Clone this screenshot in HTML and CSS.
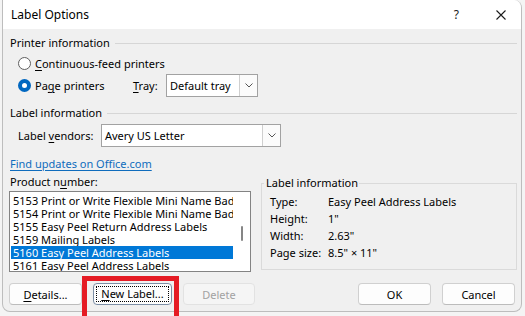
FILE: index.html
```html
<!DOCTYPE html>
<html lang="en">
<head>
    <meta charset="UTF-8">
    <title>Label Options</title>
    <link rel="stylesheet" href="styles.css">
</head>
<body>
    <div class="dialog">
        <div class="titlebar">
            <span class="title">Label Options</span>
            <div class="title-actions">
                <span class="help">?</span>
                <svg class="close" viewBox="0 0 10 10" width="10" height="10">
                    <path d="M0.5,0.5 L9.5,9.5 M9.5,0.5 L0.5,9.5" stroke="#1a1a1a" stroke-width="1.1" fill="none"/>
                </svg>
            </div>
        </div>

        <div class="content">
            <div class="group-head">Printer information</div>
            <div class="radio-row">
                <span class="radio"></span>
                <span><u>C</u>ontinuous-feed printers</span>
            </div>
            <div class="radio-row second">
                <span class="radio checked"></span>
                <span class="radio-text">Pa<u>g</u>e printers</span>
                <span class="tray-label"><u>T</u>ray:</span>
                <div class="combo tray">
                    <span class="combo-value">Default tray</span>
                    <span class="combo-arrow">
                        <svg viewBox="0 0 8 5" width="8" height="5"><polyline points="0.5,0.5 4,4 7.5,0.5" fill="none" stroke="#555" stroke-width="1"/></svg>
                    </span>
                </div>
            </div>

            <div class="group-head second-head">Label information</div>
            <div class="vendor-row">
                <span class="vendor-label">Label <u>v</u>endors:</span>
                <div class="combo vendor">
                    <span class="combo-value">Avery US Letter</span>
                    <span class="combo-arrow">
                        <svg viewBox="0 0 8 5" width="8" height="5"><polyline points="0.5,0.5 4,4 7.5,0.5" fill="none" stroke="#555" stroke-width="1"/></svg>
                    </span>
                </div>
            </div>

            <a class="link" href="#">Find updates on Office.com</a>

            <div class="columns">
                <div class="product">
                    <div class="product-label">Product n<u>u</u>mber:</div>
                    <div class="listbox">
                        <div class="list-items">
                            <div class="item">5153 Print or Write Flexible Mini Name Badges</div>
                            <div class="item">5154 Print or Write Flexible Mini Name Badges</div>
                            <div class="item">5155 Easy Peel Return Address Labels</div>
                            <div class="item">5159 Mailing Labels</div>
                            <div class="item selected">5160 Easy Peel Address Labels</div>
                            <div class="item">5161 Easy Peel Address Labels</div>
                        </div>
                        <div class="scrollbar"><span class="thumb"></span></div>
                    </div>
                </div>

                <fieldset class="info">
                    <legend>Label information</legend>
                    <div class="info-grid">
                        <span>Type:</span><span>Easy Peel Address Labels</span>
                        <span>Height:</span><span>1"</span>
                        <span>Width:</span><span>2.63"</span>
                        <span>Page size:</span><span>8.5" × 11"</span>
                    </div>
                </fieldset>
            </div>

            <div class="buttons">
                <button class="btn"><u>D</u>etails...</button>
                <button class="btn focused"><span class="focus-ring"><u>N</u>ew Label...</span></button>
                <button class="btn disabled">Delete</button>
                <span class="spacer"></span>
                <button class="btn">OK</button>
                <button class="btn">Cancel</button>
            </div>
        </div>
    </div>
    <div class="highlight"></div>
</body>
</html>
```

FILE: styles.css
```css
body, html {
    margin: 0;
    padding: 0;
    height: 100%;
    overflow: hidden;
    background: #f4f4f4;
    font-family: "Noto Sans", "Open Sans", sans-serif;
    font-size: 11px;
    color: #000;
}
u {
    text-decoration-thickness: 1px;
    text-underline-offset: 2px;
}
.dialog {
    box-sizing: border-box;
    width: 520px;
    height: 312px;
    margin-left: 2px;
    border: 1px solid #bdbdbd;
    border-top: none;
    border-radius: 0 8px 8px 8px;
    background: #f0f0f0;
    overflow: hidden;
    display: flex;
    flex-direction: column;
}
.titlebar {
    height: 29px;
    flex-shrink: 0;
    background: #fff;
    display: flex;
    align-items: center;
    padding: 0 15px 0 8px;
}
.title {
    font-size: 12px;
}
.title-actions {
    margin-left: auto;
    display: flex;
    align-items: center;
    gap: 37px;
}
.help {
    font-size: 12px;
    color: #1a1a1a;
}
.content {
    padding: 0 4px 0 7px;
    display: flex;
    flex-direction: column;
}
.group-head {
    margin-top: 6px;
    height: 16px;
    line-height: 16px;
    display: flex;
    align-items: center;
}
.group-head::after {
    content: "";
    flex: 1;
    height: 1px;
    margin-left: 5px;
    background: #d6d6d6;
}
.second-head {
    margin-top: 8px;
}
.radio-row {
    margin-top: 4px;
    height: 16px;
    padding-left: 8px;
    display: flex;
    align-items: center;
}
.radio-row.second {
    margin-top: 3px;
    height: 23px;
}
.radio {
    box-sizing: border-box;
    width: 13px;
    height: 13px;
    border-radius: 50%;
    border: 1px solid #5f5f5f;
    background: #fff;
    margin-right: 4px;
    flex-shrink: 0;
}
.radio.checked {
    border: 4px solid #0067c0;
    background: #fff;
}
.radio-text {
    width: 98px;
}
.tray-label {
    width: 33px;
}
.combo {
    box-sizing: border-box;
    height: 23px;
    border: 1px solid #a2a2a2;
    background: #fff;
    display: flex;
    align-items: center;
}
.combo-value {
    flex: 1;
    padding-left: 3px;
    white-space: nowrap;
}
.combo-arrow {
    box-sizing: border-box;
    width: 18px;
    height: 100%;
    border-left: 1px solid #cfcfcf;
    background: #fbfbfb;
    display: flex;
    align-items: center;
    justify-content: center;
}
.combo.tray {
    width: 92px;
}
.vendor-row {
    margin-top: 3px;
    padding-left: 8px;
    display: flex;
    align-items: center;
}
.vendor-label {
    width: 83px;
}
.combo.vendor {
    width: 180px;
}
.link {
    margin-top: 9px;
    height: 16px;
    line-height: 16px;
    color: #0f6cbd;
    text-decoration: underline;
    text-underline-offset: 2px;
    align-self: flex-start;
}
.columns {
    margin-top: 2px;
    display: flex;
    gap: 10px;
}
.product {
    width: 242px;
    margin-left: -1px;
}
.product-label {
    height: 16px;
    line-height: 16px;
    padding-left: 1px;
}
.listbox {
    box-sizing: border-box;
    margin-top: 1px;
    height: 81px;
    border: 1px solid #838383;
    background: #fff;
    display: flex;
    overflow: hidden;
}
.list-items {
    width: 222px;
    padding: 2px 0 0 1px;
    overflow: hidden;
}
.item {
    height: 13px;
    line-height: 13px;
    padding-left: 2px;
    white-space: nowrap;
    overflow: hidden;
}
.item.selected {
    background: #0078d7;
    color: #fff;
}
.scrollbar {
    flex: 1;
    display: flex;
    justify-content: center;
    padding-top: 34px;
}
.thumb {
    width: 2px;
    height: 15px;
    border-radius: 1px;
    background: #868686;
}
.info {
    flex: 1;
    margin: 1px 0 0 0;
    padding: 0 0 0 8px;
    min-width: 0;
    height: 95px;
    box-sizing: border-box;
    border: 1px solid #dadada;
}
.info legend {
    padding: 0 1px 0 2px;
    margin-left: -6px;
    line-height: 16px;
}
.info-grid {
    margin-top: 2px;
    display: grid;
    grid-template-columns: 58px auto;
    grid-auto-rows: 17px;
    align-items: center;
}
.buttons {
    margin-top: 11px;
    margin-left: -1px;
    margin-right: 2px;
    display: flex;
    gap: 11px;
}
.spacer {
    flex: 1;
}
.btn {
    box-sizing: border-box;
    width: 73px;
    height: 22px;
    padding: 0;
    font: inherit;
    color: #000;
    background: #fdfdfd;
    border: 1px solid #d0d0d0;
    border-bottom-color: #bcbcbc;
    border-radius: 4px;
    display: flex;
    align-items: center;
    justify-content: center;
}
.btn.focused {
    width: 79px;
    border-color: #7c8ea5;
}
.focus-ring {
    box-sizing: border-box;
    width: 73px;
    height: 16px;
    line-height: 14px;
    border: 1px dotted #000;
    text-align: center;
}
.btn.disabled {
    width: 72px;
    background: #f5f5f5;
    border-color: #e2e2e2;
    color: #a2a2a2;
}
.highlight {
    position: absolute;
    left: 82px;
    top: 276px;
    width: 97px;
    height: 46px;
    box-sizing: border-box;
    border: 5px solid #e51b24;
}
```
